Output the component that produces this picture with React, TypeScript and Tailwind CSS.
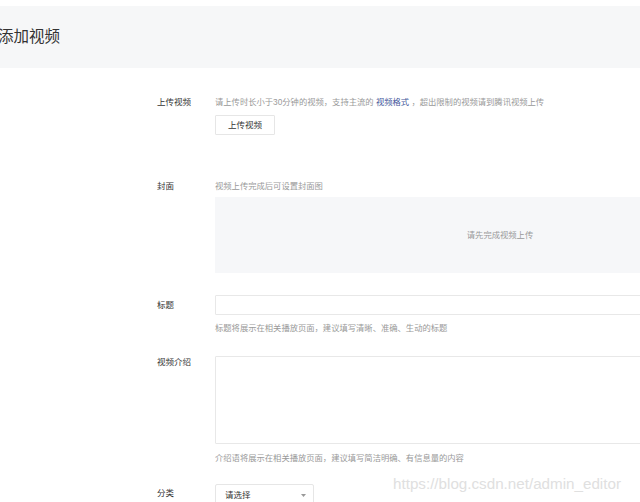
import React from "react";

const font = { fontFamily: '"Liberation Sans", "Noto Sans CJK SC", sans-serif' };

export default function App() {
  return (
    <div
      className="relative w-[640px] h-[502px] overflow-hidden bg-white text-[#333]"
      style={font}
    >
      <div className="h-[6px]" />
      <div className="h-[62px] bg-[#f6f7f8] flex items-center">
        <h1 className="ml-[-2px] text-[15.5px] leading-none font-normal text-[#333]">添加视频</h1>
      </div>

      <div className="pl-[157px] w-[1000px]">
        {/* 上传视频 */}
        <div className="flex mt-[28px]">
          <div className="w-[58px] text-[8.5px] leading-[12px] text-[#333]">上传视频</div>
          <div className="flex flex-col items-start">
            <div className="text-[8.3px] leading-[12px] text-[#999]">
              请上传时长小于30分钟的视频，支持主流的 <span className="text-[#42569a]">视频格式</span> ，超出限制的视频请到腾讯视频上传
            </div>
            <button className="mt-[7px] w-[60px] h-[20px] border border-[#e6e6e6] bg-white text-[8.5px] leading-none text-[#333] rounded-[1px]">
              上传视频
            </button>
          </div>
        </div>

        {/* 封面 */}
        <div className="flex mt-[45px]">
          <div className="w-[58px] text-[8.5px] leading-[12px] text-[#333]">封面</div>
          <div className="flex flex-col">
            <div className="text-[8.3px] leading-[12px] text-[#999]">视频上传完成后可设置封面图</div>
            <div className="mt-[5px] w-[570px] h-[76px] bg-[#f6f7f9] flex items-center justify-center text-[8.3px] text-[#999]">
              请先完成视频上传
            </div>
          </div>
        </div>

        {/* 标题 */}
        <div className="flex mt-[22px]">
          <div className="w-[58px] pt-[4px] text-[8.5px] leading-[12px] text-[#333]">标题</div>
          <div className="flex flex-col">
            <div className="w-[570px] h-[20px] border border-[#e8e8e8] rounded-[1px] bg-white" />
            <div className="mt-[7px] text-[8.3px] leading-[12px] text-[#999]">
              标题将展示在相关播放页面，建议填写清晰、准确、生动的标题
            </div>
          </div>
        </div>

        {/* 视频介绍 */}
        <div className="flex mt-[22px]">
          <div className="w-[58px] text-[8.5px] leading-[12px] text-[#333]">视频介绍</div>
          <div className="flex flex-col">
            <div className="w-[570px] h-[88px] border border-[#e8e8e8] rounded-[1px] bg-white" />
            <div className="mt-[8px] text-[8.3px] leading-[12px] text-[#999]">
              介绍语将展示在相关播放页面，建议填写简洁明确、有信息量的内容
            </div>
          </div>
        </div>

        {/* 分类 */}
        <div className="flex mt-[20px]">
          <div className="w-[58px] pt-[3px] text-[8.5px] leading-[12px] text-[#333]">分类</div>
          <div className="w-[99px] h-[22px] border border-[#e6e6e6] rounded-[2px] flex items-center justify-between pl-[9px] pr-[7px]">
            <span className="text-[8.5px] leading-none text-[#333]">请选择</span>
            <svg width="5" height="3" viewBox="0 0 5 3">
              <path d="M0 0 L5 0 L2.5 3 Z" fill="#999" />
            </svg>
          </div>
        </div>
      </div>

      <div
        className="absolute left-[393px] top-[474px] text-[15.2px] leading-[20px] text-[#e0e0e0] whitespace-nowrap pointer-events-none"
        style={{ fontFamily: '"Liberation Sans", Arial, sans-serif' }}
      >
        https://blog.csdn.net/admin_editor
      </div>
    </div>
  );
}
